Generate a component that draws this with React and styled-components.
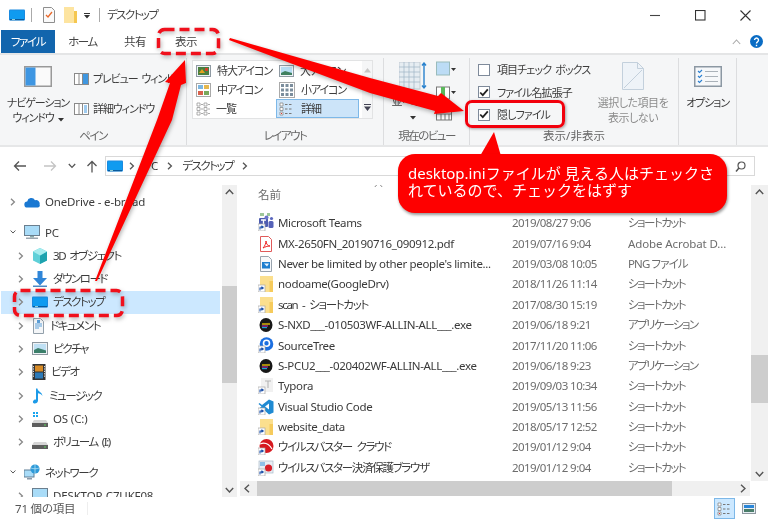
import React from 'react';
import styled, { createGlobalStyle } from 'styled-components';

const Global = createGlobalStyle`
  html, body { margin: 0; padding: 0; background: #fff; }
  #root { width: 768px; height: 520px; overflow: hidden; }
`;

const Shell = styled.div`
  position: relative;
  width: 768px;
  height: 520px;
  overflow: hidden;
  background: #fff;
  font-family: "Noto Sans", "Noto Sans CJK JP", sans-serif;
  font-size: 11.5px;
  font-feature-settings: "palt" 1;
  color: #3c3c3c;
  line-height: 1.2;
`;
const Window = styled.div`
  display: flex;
  flex-direction: column;
  height: 520px;
  filter: blur(0.5px);
`;
const TitleBar = styled.div`
  height: 30px;
  flex: none;
  display: flex;
  align-items: center;
  padding-left: 9px;
`;
const QuickIcon = styled.span`
  display: flex;
  flex: none;
  margin-left: ${p => p.$ml || 0}px;
`;
const TitleSep = styled.span`
  width: 1px;
  height: 14px;
  background: #aaa;
  flex: none;
  margin-left: ${p => p.$ml}px;
`;
const TitleText = styled.span`
  margin-left: 7px;
  font-size: 11.5px;
  letter-spacing: -1.6px;
  color: #444;
`;
const WinButtons = styled.div`
  margin-left: auto;
  display: flex;
  align-items: center;
  gap: 34px;
  padding-right: 17px;
`;
const TabBar = styled.div`
  height: 23px;
  flex: none;
  display: flex;
  align-items: stretch;
  padding-left: 1px;
`;
const Tab = styled.div`
  width: ${p => p.$w}px;
  display: flex;
  align-items: center;
  justify-content: center;
  font-size: 11.5px;
  letter-spacing: ${p => (p.$kana ? '-1.4px' : '-0.4px')};
  background: ${p => (p.$file ? '#1265ad' : 'transparent')};
  color: ${p => (p.$file ? '#fff' : '#444')};
`;
const HelpArea = styled.div`
  margin-left: auto;
  display: flex;
  align-items: center;
  gap: 9px;
  padding-right: 5px;
`;
const Ribbon = styled.div`
  height: 94px;
  flex: none;
  box-sizing: border-box;
  background: #f5f6f7;
  border-top: 2px solid #e4e5e6;
  border-bottom: 2px solid #e6e7e8;
  display: flex;
  font-size: 11px;
  letter-spacing: -1.1px;
  word-spacing: 2px;
`;
const Group = styled.div`
  width: ${p => p.$w}px;
  flex: none;
  box-sizing: border-box;
  border-right: 1px solid #dcdddf;
  margin-top: 3px;
  display: flex;
  flex-direction: column;
`;
const GroupBody = styled.div`
  height: 71px;
  flex: none;
  display: flex;
`;
const GroupLabel = styled.div`
  text-align: center;
  color: #666;
  font-size: 11.5px;
  line-height: 14px;
  letter-spacing: ${p => (p.$wide ? '0' : '-1.5px')};
`;
const LargeButton = styled.div`
  width: ${p => p.$w}px;
  flex: none;
  margin-left: ${p => p.$ml || 0}px;
  display: flex;
  flex-direction: column;
  align-items: center;
  padding-top: ${p => p.$pt ?? 6}px;
  text-align: center;
  line-height: 15px;
  letter-spacing: ${p => (p.$off ? '-0.5px' : 'inherit')};
  color: ${p => (p.$off ? '#8c8c8c' : '#3c3c3c')};
`;
const LargeLabel = styled.div`
  margin-top: ${p => p.$mt}px;
  white-space: nowrap;
  ${p => p.$open && 'letter-spacing: 0;'}
`;
const SmallCol = styled.div`
  display: flex;
  flex-direction: column;
  gap: 14px;
  padding: 13px 0 0 2px;
`;
const SmallBtn = styled.div`
  display: flex;
  align-items: center;
  gap: 4px;
  height: 16px;
  white-space: nowrap;
`;
const Gallery = styled.div`
  margin: 2px 0 0 5px;
  width: 181px;
  height: 59px;
  box-sizing: border-box;
  background: #fff;
  border: 1px solid #e2e3e4;
  display: flex;
`;
const GalleryGrid = styled.div`
  width: 166px;
  flex: none;
  display: grid;
  grid-template-columns: 83px 83px;
  grid-auto-rows: 19px;
`;
const GalleryItem = styled.div`
  display: flex;
  align-items: center;
  gap: 6px;
  padding-left: 3px;
  white-space: nowrap;
  overflow: hidden;
  box-sizing: border-box;
  background: ${p => (p.$sel ? '#cce4f9' : 'transparent')};
  outline: ${p => (p.$sel ? '1px solid #7db8e8' : 'none')};
  outline-offset: -1px;
`;
const GalleryScroll = styled.div`
  width: 10px;
  margin-left: auto;
  display: flex;
  flex-direction: column;
  align-items: center;
  justify-content: space-around;
  background: #f5f6f7;
  color: #777;
`;
const ViewCol = styled.div`
  display: flex;
  flex-direction: column;
  gap: 7px;
  padding: 3px 0 0 0;
`;
const ChecksCol = styled.div`
  width: 131px;
  flex: none;
  display: flex;
  flex-direction: column;
  gap: 7px;
  padding: 4px 0 0 8px;
  box-sizing: border-box;
`;
const CheckRow = styled.div`
  display: flex;
  align-items: center;
  gap: 7px;
  height: 15.5px;
  white-space: nowrap;
  letter-spacing: -0.9px;
`;
const CheckBox = styled.span`
  width: 12px;
  height: 12px;
  flex: none;
  box-sizing: border-box;
  border: 1px solid #7e8a9a;
  background: #fff;
  display: flex;
  align-items: center;
  justify-content: center;
`;
const AddressRow = styled.div`
  height: 38px;
  flex: none;
  display: flex;
  align-items: center;
  box-sizing: border-box;
  padding: 0 13px;
`;
const NavIcons = styled.div`
  width: 92px;
  flex: none;
  display: grid;
  grid-template-columns: 30px 25px 18px 12px;
  align-items: center;
`;
const AddressBox = styled.div`
  flex: 1;
  height: 20px;
  box-sizing: border-box;
  border: 1px solid #d9d9d9;
  display: flex;
  align-items: center;
  padding-left: 1px;
  gap: 9px;
  font-size: 11.5px;
`;
const AddressIcon = styled.span`
  display: flex;
  margin-right: -3px;
`;
const AddressCrumb = styled.span`
  letter-spacing: -1.5px;
`;
const SearchIcon = styled.span`
  margin-left: auto;
  display: flex;
  padding-right: 8px;
`;
const Main = styled.div`
  height: 312px;
  flex: none;
  display: flex;
`;
const Sidebar = styled.div`
  width: 222px;
  flex: none;
  padding-top: 5.5px;
  box-sizing: border-box;
  overflow: hidden;
`;
const TreeRow = styled.div`
  height: 23.3px;
  display: flex;
  align-items: center;
  padding-left: ${p => (p.$child ? 17 : 9)}px;
  margin-top: ${p => p.$gap || 0}px;
  margin-right: 2px;
  margin-left: 1px;
  background: ${p => (p.$sel ? '#cce8ff' : 'transparent')};
  white-space: pre;
  letter-spacing: ${p => (p.$jp ? '-1.45px' : '-0.15px')};
  word-spacing: ${p => (p.$jp ? '2.5px' : '0')};
`;
const Chevron = styled.span`
  width: 6px;
  height: 6px;
  flex: none;
  display: flex;
  align-items: center;
  margin-right: 8px;
`;
const TreeIcon = styled.span`
  display: flex;
  flex: none;
  margin-right: 5px;
`;
const VScroll = styled.div`
  width: ${p => p.$w}px;
  flex: none;
  background: #f0f0f0;
  display: flex;
  flex-direction: column;
  align-items: center;
  justify-content: space-between;
  position: relative;
  padding: 4px 0;
  box-sizing: border-box;
`;
const Thumb = styled.div`
  position: absolute;
  left: 0;
  right: 0;
  top: ${p => p.$t}px;
  height: ${p => p.$h}px;
  background: #cdcdcd;
`;
const ListPane = styled.div`
  flex: 1;
  min-width: 0;
  margin-left: 3px;
  display: flex;
  flex-direction: column;
`;
const ListScroll = styled.div`
  flex: 1;
  min-height: 0;
  display: flex;
`;
const ListCol = styled.div`
  flex: 1;
  display: flex;
  flex-direction: column;
  min-width: 0;
  overflow: hidden;
`;
const ListHeader = styled.div`
  height: 20px;
  box-sizing: border-box;
  padding-bottom: 2px;
  flex: none;
  padding-left: 18px;
  display: flex;
  align-items: flex-end;
  color: #6b6b6b;
  position: relative;
  line-height: 16px;
`;
const SortCaret = styled.span`
  position: absolute;
  left: 134px;
  top: -3px;
  display: flex;
`;
const Sliver = styled.div`
  height: 8px;
  flex: none;
  padding-left: 18px;
`;
const FileRow = styled.div`
  height: 20.38px;
  flex: none;
  display: grid;
  grid-template-columns: 18px 20px 234px 116px 1fr;
  align-items: center;
  white-space: nowrap;
`;
const FileIcon = styled.span`
  grid-column: 2;
  display: flex;
`;
const FileName = styled.span`
  color: #3a3a3a;
  overflow: hidden;
  letter-spacing: ${p => (p.$jp ? '-1.3px' : '-0.33px')};
  word-spacing: ${p => (p.$jp ? '3px' : '0')};
`;
const FileMeta = styled.span`
  color: #6d6d6d;
  overflow: hidden;
  letter-spacing: ${p => p.$ls};
`;
const HScroll = styled.div`
  height: 15px;
  flex: none;
  margin-right: 18px;
  margin-bottom: 1px;
  background: #f0f0f0;
  display: flex;
  align-items: center;
  justify-content: space-between;
  padding: 0 4px;
  position: relative;
`;
const HThumb = styled.div`
  position: absolute;
  left: 17px;
  width: 415px;
  top: 0;
  bottom: 0;
  background: #cdcdcd;
`;
const StatusBar = styled.div`
  height: 23px;
  flex: none;
  display: flex;
  align-items: center;
  padding-left: 15px;
  color: #555;
  font-size: 11.5px;
  letter-spacing: -0.2px;
`;
const StatusSep = styled.span`
  width: 1px;
  height: 13px;
  background: #eee;
  margin-left: 12px;
`;
const ViewSwitch = styled.div`
  margin-left: auto;
  display: flex;
  align-items: center;
  gap: 3px;
  padding-right: 9px;
`;
const ViewBtn = styled.span`
  width: 21px;
  height: 21px;
  box-sizing: border-box;
  display: flex;
  align-items: center;
  justify-content: center;
  background: ${p => (p.$on ? '#cce8ff' : 'transparent')};
  border: 1px solid ${p => (p.$on ? '#7db8e8' : 'transparent')};
`;

/* annotations lying over the screenshot */
const ArrowLayer = styled.svg`
  position: absolute;
  left: 0;
  top: 0;
  width: 768px;
  height: 520px;
  pointer-events: none;
  filter: drop-shadow(1px 2px 2px rgba(0,0,0,.3)) blur(0.4px);
`;
const SolidMark = styled.div`
  position: absolute;
  left: 465px;
  top: 100px;
  width: 100px;
  height: 28px;
  box-sizing: border-box;
  border: 3px solid #f2000c;
  border-radius: 7px;
  box-shadow: 1px 1px 3px rgba(0,0,0,.35);
`;
const Callout = styled.div`
  position: absolute;
  left: 398px;
  top: 154px;
  width: 329px;
  height: 59px;
  box-sizing: border-box;
  background: #fe0000;
  border-radius: 17px;
  box-shadow: 1px 2px 3px rgba(0,0,0,.4);
  color: #fff;
  padding: 11px 8px 0 10px;
  font-size: 15px;
  line-height: 16.5px;
  font-feature-settings: "palt" 0;
  filter: blur(0.3px);
`;
const CalloutTail = styled.svg`
  position: absolute;
  left: 480px;
  top: 130px;
  width: 24px;
  height: 26px;
`;

const S = ({ w = 16, h = 16, vb, children }) => (
  <svg width={w} height={h} viewBox={vb || `0 0 ${w} ${h}`}>{children}</svg>
);

const Monitor = ({ w = 16, h = 13 }) => (
  <S w={w} h={h} vb="0 0 16 13">
    <rect x="0" y="0.5" width="16" height="11" rx="1" fill="#1a8ae0" />
    <rect x="1" y="1.5" width="14" height="8.5" fill="#0f9bf0" />
    <rect x="1" y="10" width="14" height="1.2" fill="#0a5a9c" />
    <rect x="3" y="10.2" width="3" height=".7" fill="#cfe" />
  </S>
);
const PcIcon = () => (
  <S w={16} h={15}>
    <rect x=".5" y=".5" width="15" height="10" fill="#a9dcf8" stroke="#6b7f8f" />
    <rect x="6" y="11" width="4" height="1.5" fill="#8aa" />
    <rect x="2" y="12.5" width="12" height="1.5" fill="#9ba7b0" />
  </S>
);
const FolderSmall = () => (
  <S w={13} h={16}>
    <rect x="9.5" y="4" width="3.5" height="12" fill="#f5c750" />
    <rect x="0" y="0" width="10" height="16" fill="#fde4a0" />
  </S>
);

const Shortcut = () => (
  <g>
    <rect x="0" y="9" width="7" height="7" fill="#fff" stroke="#a7a7a7" strokeWidth=".7" />
    <path d="M2 14.5 V12 H5 M3.4 10.8 L5.2 12 L3.4 13.2" fill="none" stroke="#1a4fa8" strokeWidth="1.1" />
  </g>
);

const FileGlyph = ({ kind }) => {
  switch (kind) {
    case 'teams':
      return (
        <S>
          <rect x="1" y="3" width="9" height="9" rx="1" fill="#4d5cb0" />
          <path d="M3 5h5M5.5 5v6" stroke="#fff" strokeWidth="1.3" />
          <circle cx="8.5" cy="2.5" r="2" fill="#6a74c8" />
          <circle cx="13.5" cy="3.5" r="1.6" fill="#5a66bd" />
          <rect x="10.5" y="6" width="5" height="7" rx="1.5" fill="#5562b8" />
          <Shortcut />
        </S>
      );
    case 'pdf':
      return (
        <S>
          <path d="M2.5 .5h8l3 3v12h-11z" fill="#fff" stroke="#e05a5a" />
          <path d="M5 12c2-2 3-5 3-7 0 3 2 5 4 5-3 0-5 1-7 2z" fill="none" stroke="#e22" strokeWidth="1" />
        </S>
      );
    case 'png':
      return (
        <S>
          <path d="M2.5 .5h8l3 3v12h-11z" fill="#f7f9fb" stroke="#9aa4ae" />
          <rect x="4" y="6" width="8" height="6.5" fill="#1f7fd0" />
          <path d="M6 7.5h5l-2 3z" fill="#e8f4ff" />
        </S>
      );
    case 'folder':
      return (
        <S>
          <rect x="2" y="0" width="13" height="16" fill="#fbdf8e" />
          <rect x="11.5" y="5" width="3.5" height="11" fill="#f6cb5c" />
          <Shortcut />
        </S>
      );
    case 'exe':
      return (
        <S>
          <ellipse cx="8" cy="8" rx="6.5" ry="7" fill="#181818" />
          <path d="M3 7.5l9-3v3l-9 3z" fill="#222" />
          <path d="M4 7h8" stroke="#f2c600" strokeWidth="1.3" />
          <path d="M4 9h6" stroke="#b0289a" strokeWidth="1.2" />
          <path d="M4 10.6h5" stroke="#19a0d8" strokeWidth="1.2" />
        </S>
      );
    case 'tree':
      return (
        <S>
          <circle cx="8.5" cy="7" r="6.8" fill="#1c6fe0" />
          <circle cx="8.5" cy="6.3" r="3" fill="none" stroke="#fff" strokeWidth="1.6" />
          <Shortcut />
        </S>
      );
    case 'typora':
      return (
        <S>
          <rect x="3" y="0" width="12" height="14" fill="#f1f1f1" />
          <path d="M7 3h6M10 3v7" stroke="#b5b5b5" strokeWidth="1.1" />
          <Shortcut />
        </S>
      );
    case 'vscode':
      return (
        <S>
          <path d="M11 0.5l4.5 2v11l-4.5 2L4 9l-2.5 2L.5 10l3-2.5L.5 5l1-1L4 6z" fill="#1f8ad2" />
          <path d="M11 4.5v6L7 7.5z" fill="#fff" />
          <Shortcut />
        </S>
      );
    case 'trend':
      return (
        <S>
          <circle cx="8.5" cy="7" r="7" fill="#d71920" />
          <path d="M2 5c5-2 9 0 12 5" fill="none" stroke="#fff" strokeWidth="1.2" />
          <Shortcut />
        </S>
      );
    case 'trend2':
      return (
        <S>
          <rect x="1" y="1" width="14" height="12" fill="#e8eff6" stroke="#a9bac8" strokeWidth=".7" />
          <circle cx="10.5" cy="8" r="3.6" fill="#d7202a" />
          <rect x="2" y="2" width="5" height="4" fill="#8fc1e8" />
          <Shortcut />
        </S>
      );
    default:
      return null;
  }
};

const ChevR = ({ c = '#888' }) => (
  <S w={6} h={8}><path d="M1 .8 L4.4 4 L1 7.2" fill="none" stroke={c} strokeWidth="1.3" /></S>
);
const ChevD = () => (
  <S w={8} h={6}><path d="M.8 1 L4 4.4 L7.2 1" fill="none" stroke="#555" strokeWidth="1.3" /></S>
);
const Tri = ({ c = '#333' }) => (
  <S w={6} h={4}><path d="M0 0h6L3 3.5z" fill={c} /></S>
);
const Chk = () => (
  <S w={10} h={9}><path d="M1.2 4.5 L3.8 7.2 L8.8 1.4" fill="none" stroke="#222" strokeWidth="1.8" /></S>
);

const PaneIcon = ({ side }) => (
  <S w={15} h={12}>
    <rect x=".5" y=".5" width="14" height="11" fill="#fff" stroke="#8a8a8a" />
    {side === 'l' ? (
      <rect x="9" y="1" width="5" height="10" fill="#3f97e0" />
    ) : (
      <path d="M10 3h3M10 5h3M10 7h3M10 9h3" stroke="#3f97e0" />
    )}
    <path d="M5 1v10M8.5 1v10" stroke="#8a8a8a" />
  </S>
);
const NavPaneIcon = () => (
  <S w={28} h={21}>
    <rect x=".75" y=".75" width="26.5" height="19.5" fill="#fafafa" stroke="#999" strokeWidth="1.5" />
    <rect x="1.5" y="1.5" width="10" height="18" fill="#3e96e2" />
  </S>
);
const GridGlyph = ({ kind }) => {
  if (kind === 'xl' || kind === 'l') {
    return (
      <S w={15} h={12}>
        <rect x=".5" y=".5" width="14" height="11" fill="#eef3f7" stroke="#8f9aa3" />
        <rect x="2" y="2" width="11" height="8" fill={kind === 'xl' ? '#4b7f3f' : '#b6dcf3'} />
        <path d={kind === 'xl' ? 'M3 8l3-4 3 4z' : 'M2 8l4-2 7 2v2H2z'} fill={kind === 'xl' ? '#e6a21d' : '#3f8060'} />
        {kind === 'xl' && <rect x="9" y="3" width="3" height="3" fill="#d2402c" />}
      </S>
    );
  }
  if (kind === 'm') {
    return (
      <S w={15} h={14}>
        <rect x=".5" y=".5" width="14" height="13" fill="#fff" stroke="#a9a9a9" />
        <rect x="2" y="2" width="5" height="4" fill="#7db6e0" />
        <rect x="8" y="2" width="5" height="4" fill="#e6b84e" />
        <rect x="2" y="8" width="5" height="4" fill="#d9614c" />
        <rect x="8" y="8" width="5" height="4" fill="#7aa95c" />
      </S>
    );
  }
  if (kind === 's') {
    return (
      <S w={16} h={16}>
        <rect x=".5" y=".5" width="15" height="15" fill="#fff" stroke="#aaa" />
        {[2, 6.5, 11].map(x => [2, 6.5, 11].map(y => (
          <rect key={`${x}${y}`} x={x} y={y} width="3" height="3" fill={(x + y) % 3 ? '#7b8d9c' : '#d9614c'} />
        )))}
      </S>
    );
  }
  if (kind === 'list') {
    return (
      <S w={14} h={14}>
        <path d="M1 1h3v3H1zM1 5.5h3v3H1zM1 10h3v3H1zM8 1h3v3H8zM8 5.5h3v3H8zM8 10h3v3H8z" fill="#fff" stroke="#999" strokeWidth=".8" />
        <path d="M5 2.5h2M5 7h2M5 11.5h2M12 2.5h2M12 7h2M12 11.5h2" stroke="#aaa" />
      </S>
    );
  }
  return (
    <S w={16} h={14}>
      <path d="M1 1h3v3H1zM1 5.5h3v3H1zM1 10h3v3H1z" fill="#fff" stroke="#888" strokeWidth=".8" />
      <rect x="2" y="11" width="1" height="1" fill="#d33" />
      <path d="M6 2.5h2.5M10 2.5h2.5M6 7h2.5M10 7h2.5M6 11.5h2.5M10 11.5h2.5" stroke="#777" />
    </S>
  );
};

const TREE = [
  { t: 'OneDrive - e-broad', chev: 'r', icon: 'cloud' },
  { t: 'PC', chev: 'd', icon: 'pc', gap: 7 },
  { t: '3D オブジェクト', child: 1, icon: 'cube', jp: 1 },
  { t: 'ダウンロード', child: 1, icon: 'down', jp: 1 },
  { t: 'デスクトップ', child: 1, icon: 'desk', sel: 1, jp: 1 },
  { t: 'ドキュメント', child: 1, icon: 'doc', jp: 1 },
  { t: 'ピクチャ', child: 1, icon: 'pic', jp: 1 },
  { t: 'ビデオ', child: 1, icon: 'video', jp: 1 },
  { t: 'ミュージック', child: 1, icon: 'music', jp: 1 },
  { t: 'OS (C:)', child: 1, icon: 'os' },
  { t: 'ボリューム (I:)', child: 1, icon: 'drive', jp: 1 },
  { t: 'ネットワーク', chev: 'd', icon: 'net', gap: 7, jp: 1 },
  { t: 'DESKTOP-C7UKF08', child: 1, icon: 'pc' },
];

const TreeGlyph = ({ k }) => {
  switch (k) {
    case 'cloud':
      return <S w={16} h={11}><path d="M3.5 10.5a3 3 0 0 1-.3-6A4.2 4.2 0 0 1 11 3.2a3.6 3.6 0 0 1 4.6 4.2 2.4 2.4 0 0 1-1.5 3.1z" fill="#1a78d2" /></S>;
    case 'pc': return <PcIcon />;
    case 'cube':
      return <S w={16} h={16}><path d="M8 0l7 3.5v9L8 16l-7-3.5v-9z" fill="#5fd0d8" /><path d="M8 7.5V16l7-3.5v-9z" fill="#1ea2ae" /><path d="M1 3.5L8 7.5 15 3.5 8 0z" fill="#a7ecee" /></S>;
    case 'down':
      return <S w={16} h={16}><path d="M5.5 0h5v7H15l-7 7.5L1 7h4.5z" fill="#2f86d8" /><rect x="1" y="14.6" width="14" height="1.2" fill="#1f6fb8" /></S>;
    case 'desk': return <Monitor />;
    case 'doc':
      return <S w={13} h={16}><path d="M1.5.5h7l3 3v12h-10z" fill="#f4f6f8" stroke="#93a0ab" /><path d="M3 6h7M3 8h7M3 10h4" stroke="#5b9fd8" /><rect x="5" y="2" width="3" height="3" fill="#5b9fd8" /></S>;
    case 'pic':
      return <S w={16} h={13}><rect x=".5" y=".5" width="15" height="12" fill="#eef2f5" stroke="#8d979f" /><rect x="2" y="2" width="12" height="9" fill="#bfe0f4" /><path d="M2 8l4-2 8 2.5V11H2z" fill="#3b7f6a" /></S>;
    case 'video':
      return <S w={14} h={16}><rect x=".5" width="13" height="16" fill="#333" /><rect x="3" y="1.5" width="8" height="6" fill="#d88b26" /><rect x="3" y="8.5" width="8" height="6" fill="#2d7ab8" /><path d="M1.5 2v12M12.5 2v12" stroke="#ddd" strokeDasharray="1.2 1.2" /></S>;
    case 'music':
      return <S w={12} h={16}><path d="M4 .5h1.4c.3 3 5 3.5 5 7.5-.8-2-3-2.5-4.4-2.8V12.5C6 14.5 4 15.8 2.3 15.5.5 15 .4 13 2 12c.8-.5 1.5-.5 2-.3z" fill="#1d9be8" /></S>;
    case 'os':
      return <S w={16} h={16}><path d="M1 1h2v2H1zM4 1h2v2H4zM1 4h2v2H1zM4 4h2v2H4z" fill="#19a5ee" /><path d="M2 9h12l2 3H0z" fill="#d6d6d6" /><rect y="12" width="16" height="4" fill="#5e5e5e" /><rect x="12" y="13.5" width="2" height="1" fill="#5cd65c" /></S>;
    case 'drive':
      return <S w={16} h={16}><path d="M2 8h12l2 3H0z" fill="#d6d6d6" /><rect y="11" width="16" height="4" fill="#5e5e5e" /><rect x="12" y="12.5" width="2" height="1" fill="#5cd65c" /></S>;
    case 'net':
      return <S w={16} h={16}><rect x="0" y="6" width="10" height="7" fill="#a9dcf8" stroke="#5f7f96" /><rect x="3" y="14" width="5" height="1.5" fill="#89a" /><circle cx="11" cy="5" r="4.6" fill="#2f9ad8" /><path d="M7 4c2 1 6 1 8 0M11 .5v9" stroke="#bfe8f8" strokeWidth=".7" fill="none" /></S>;
    default:
      return null;
  }
};

const FILES = [
  ['teams', 'Microsoft Teams', '2019/08/27 9:06', 'ショートカット'],
  ['pdf', 'MX-2650FN_20190716_090912.pdf', '2019/07/16 9:04', 'Adobe Acrobat D...'],
  ['png', "Never be limited by other people's limite...", '2019/03/08 10:05', 'PNG ファイル'],
  ['folder', 'nodoame(GoogleDrv)', '2018/11/26 11:14', 'ショートカット'],
  ['folder', 'scan - ショートカット', '2017/08/30 15:19', 'ショートカット'],
  ['exe', 'S-NXD___-010503WF-ALLIN-ALL___.exe', '2019/06/18 9:21', 'アプリケーション'],
  ['tree', 'SourceTree', '2017/11/20 11:06', 'ショートカット'],
  ['exe', 'S-PCU2___-020402WF-ALLIN-ALL___.exe', '2019/06/18 9:23', 'アプリケーション'],
  ['typora', 'Typora', '2019/09/03 10:34', 'ショートカット'],
  ['vscode', 'Visual Studio Code', '2019/05/13 11:56', 'ショートカット'],
  ['folder', 'website_data', '2018/05/17 12:52', 'ショートカット'],
  ['trend', 'ウイルスバスター クラウド', '2019/01/12 9:04', 'ショートカット'],
  ['trend2', 'ウイルスバスター決済保護ブラウザ', '2019/01/12 9:04', 'ショートカット'],
];

const hasKana = s => /[\u3040-\u30ff]/.test(s);
const typeSpacing = s => (s.startsWith('Adobe') ? '-0.1px' : s.startsWith('PNG') ? '-0.9px' : '-1.55px');

export default function App() {
  return (
    <Shell>
      <Global />
      <Window>
        <TitleBar>
          <QuickIcon><Monitor /></QuickIcon>
          <TitleSep $ml={6} />
          <QuickIcon $ml={11}>
            <S w={12} h={16}>
              <path d="M.5.5h8l3 3v12H.5z" fill="#fafafa" stroke="#8e8e8e" />
              <path d="M3 8l2 2 4-5" fill="none" stroke="#e8682a" strokeWidth="1.3" />
            </S>
          </QuickIcon>
          <QuickIcon $ml={9}><FolderSmall /></QuickIcon>
          <QuickIcon $ml={7}>
            <S w={7} h={7}><path d="M0 1h6v1H0zM0 3h6L3 6.5z" fill="#333" /></S>
          </QuickIcon>
          <TitleSep $ml={8} />
          <TitleText>デスクトップ</TitleText>
          <WinButtons>
            <S w={11} h={11}><path d="M0 5.5h10" stroke="#444" strokeWidth="1.1" /></S>
            <S w={11} h={11}><rect x=".5" y=".5" width="9.5" height="9.5" fill="none" stroke="#333" strokeWidth="1.1" /></S>
            <S w={11} h={11}><path d="M.5.5l10 10M10.5.5l-10 10" stroke="#333" strokeWidth="1.1" /></S>
          </WinButtons>
        </TitleBar>
        <TabBar>
          <Tab $file $kana $w={54}>ファイル</Tab>
          <Tab $kana $w={55}>ホーム</Tab>
          <Tab $w={50}>共有</Tab>
          <Tab $w={52}>表示</Tab>
          <HelpArea>
            <S w={9} h={6}><path d="M.8 5L4.5 1l3.7 4" fill="none" stroke="#aaa" strokeWidth="1.1" /></S>
            <S w={13} h={13}>
              <circle cx="6.5" cy="6.5" r="6.5" fill="#0a6cc4" />
              <path d="M4.5 5a2 2 0 1 1 3 1.8c-.8.5-1 .8-1 1.7M6.5 9.8v1.4" fill="none" stroke="#fff" strokeWidth="1.4" />
            </S>
          </HelpArea>
        </TabBar>
        <Ribbon>
          <Group $w={187}>
            <GroupBody>
              <LargeButton $w={68} $ml={4} $pt={8}>
                <NavPaneIcon />
                <LargeLabel $mt={8}>ナビゲーション<br />ウィンドウ <Tri /></LargeLabel>
              </LargeButton>
              <SmallCol>
                <SmallBtn><PaneIcon side="l" />プレビュー ウィンドウ</SmallBtn>
                <SmallBtn><PaneIcon side="r" />詳細ウィンドウ</SmallBtn>
              </SmallCol>
            </GroupBody>
            <GroupLabel>ペイン</GroupLabel>
          </Group>
          <Group $w={197}>
            <GroupBody>
              <Gallery>
                <GalleryGrid>
                  <GalleryItem><GridGlyph kind="xl" />特大アイコン</GalleryItem>
                  <GalleryItem><GridGlyph kind="l" />大アイコン</GalleryItem>
                  <GalleryItem><GridGlyph kind="m" />中アイコン</GalleryItem>
                  <GalleryItem><GridGlyph kind="s" />小アイコン</GalleryItem>
                  <GalleryItem><GridGlyph kind="list" />一覧</GalleryItem>
                  <GalleryItem $sel><GridGlyph kind="detail" />詳細</GalleryItem>
                </GalleryGrid>
                <GalleryScroll>
                  <S w={7} h={5}><path d="M0 4.5h7L3.5 0z" fill="#c6c6c6" /></S>
                  <Tri c="#556" />
                  <S w={7} h={7}><path d="M0 0h7v1H0zM0 2.5h7L3.5 7z" fill="#445" /></S>
                </GalleryScroll>
              </Gallery>
            </GroupBody>
            <GroupLabel>レイアウト</GroupLabel>
          </Group>
          <Group $w={86}>
            <GroupBody>
              <LargeButton $w={46} $ml={6} $pt={4}>
                <S w={29} h={28}>
                  <rect x="0" y="0" width="21" height="27" fill="#e6edf2" stroke="#c3ccd3" />
                  <path d="M0 5h21M0 10h21M0 15h21M0 20h21M5 0v27M10 0v27M15 0v27" stroke="#9eb6c6" strokeWidth=".7" />
                  <path d="M25 1v25M23 3.5L25 1l2 2.5M23 23.5L25 26l2-2.5" fill="none" stroke="#2a82cd" strokeWidth="1.4" />
                </S>
                <LargeLabel $mt={3} $open>並べ替え<br /><Tri /></LargeLabel>
              </LargeButton>
              <ViewCol>
                <SmallBtn>
                  <S w={20} h={16}>
                    <rect x=".5" y="1" width="13" height="13" fill="#bcdcf5" stroke="#9bb" />
                    <path d="M15 7h5l-2.5 3z" fill="#333" />
                  </S>
                </SmallBtn>
                <SmallBtn>
                  <S w={20} h={16}>
                    <rect x=".5" y="3" width="13" height="12" fill="#fff" stroke="#777" />
                    <rect x="5" y="3" width="4" height="12" fill="#5cb85c" />
                    <path d="M15 7h5l-2.5 3z" fill="#333" />
                  </S>
                </SmallBtn>
                <SmallBtn>
                  <S w={20} h={14}>
                    <rect x=".5" y="3" width="15" height="9" fill="#fff" stroke="#777" />
                    <path d="M1 6h15M5 6v6M9 6v6M13 6v6" stroke="#777" />
                  </S>
                </SmallBtn>
              </ViewCol>
            </GroupBody>
            <GroupLabel>現在のビュー</GroupLabel>
          </Group>
          <Group $w={209}>
            <GroupBody>
              <ChecksCol>
                <CheckRow><CheckBox />項目チェック ボックス</CheckRow>
                <CheckRow><CheckBox><Chk /></CheckBox>ファイル名拡張子</CheckRow>
                <CheckRow><CheckBox><Chk /></CheckBox>隠しファイル</CheckRow>
              </ChecksCol>
              <LargeButton $w={64} $pt={4} $off>
                <S w={22} h={28}>
                  <path d="M.5.5h15l6 6v21H.5z" fill="#eef3f8" stroke="#c3d0dc" />
                  <path d="M15.5.5v6h6M2 26L20 8" fill="none" stroke="#c3d0dc" />
                </S>
                <LargeLabel $mt={5}>選択した項目を<br />表示しない</LargeLabel>
              </LargeButton>
            </GroupBody>
            <GroupLabel $wide>表示/非表示</GroupLabel>
          </Group>
          <Group $w={58}>
            <GroupBody>
              <LargeButton $w={57} $pt={8}>
                <S w={28} h={21}>
                  <rect x=".75" y=".75" width="26.5" height="19.5" fill="#f6f8fa" stroke="#8c98a3" strokeWidth="1.5" />
                  <path d="M4 5l1.5 1.5L8 4M4 10l1.5 1.5L8 9M4 15l1.5 1.5L8 14" fill="none" stroke="#2a7fd0" strokeWidth="1.1" />
                  <path d="M11 5.5h13M11 10.5h13M11 15.5h13" stroke="#aab2b9" />
                </S>
                <LargeLabel $mt={8}>オプション</LargeLabel>
              </LargeButton>
            </GroupBody>
          </Group>
        </Ribbon>
        <AddressRow>
          <NavIcons>
            <S w={14} h={12}><path d="M13 6H1.5M6 1.5L1.5 6 6 10.5" fill="none" stroke="#555" strokeWidth="1.3" /></S>
            <S w={14} h={12}><path d="M1 6h11.5M8 1.5L12.5 6 8 10.5" fill="none" stroke="#c4c4c4" strokeWidth="1.3" /></S>
            <ChevD />
            <S w={12} h={13}><path d="M6 12.5V1.5M1.5 6L6 1.5 10.5 6" fill="none" stroke="#555" strokeWidth="1.3" /></S>
          </NavIcons>
          <AddressBox>
            <AddressIcon><Monitor /></AddressIcon>
            <ChevR c="#555" />
            <span>PC</span>
            <ChevR c="#555" />
            <AddressCrumb>デスクトップ</AddressCrumb>
            <ChevR c="#555" />
            <SearchIcon>
              <S w={11} h={11}><circle cx="6.5" cy="4.5" r="3.5" fill="none" stroke="#555" strokeWidth="1.2" /><path d="M4 7L1 10.5" stroke="#555" strokeWidth="1.5" /></S>
            </SearchIcon>
          </AddressBox>
        </AddressRow>
        <Main>
          <Sidebar>
            {TREE.map(r => (
              <TreeRow key={r.t} $child={r.child} $sel={r.sel} $gap={r.gap} $jp={r.jp}>
                <Chevron>{r.chev === 'd' ? <ChevD /> : <ChevR />}</Chevron>
                <TreeIcon><TreeGlyph k={r.icon} /></TreeIcon>
                {r.t}
              </TreeRow>
            ))}
          </Sidebar>
          <VScroll $w={15}>
            <Thumb $t={101} $h={97} />
            <S w={9} h={6}><path d="M.8 5L4.5 1l3.7 4" fill="none" stroke="#555" strokeWidth="1.4" /></S>
            <S w={9} h={6}><path d="M.8 1L4.5 5l3.7-4" fill="none" stroke="#555" strokeWidth="1.4" /></S>
          </VScroll>
          <ListPane>
            <ListScroll>
              <ListCol>
                <ListHeader>
                  名前
                  <SortCaret>
                    <S w={9} h={6}><path d="M.8 5L4.5 1l3.7 4" fill="none" stroke="#888" strokeWidth="1" /></S>
                  </SortCaret>
                </ListHeader>
                <Sliver>
                  <S w={14} h={5}><path d="M2 2h4v3H2zM9 2h3v3H9z" fill="#9ec79a" /></S>
                </Sliver>
                {FILES.map(f => (
                  <FileRow key={f[1]}>
                    <FileIcon><FileGlyph kind={f[0]} /></FileIcon>
                    <FileName $jp={hasKana(f[1])}>{f[1]}</FileName>
                    <FileMeta $ls="-0.55px">{f[2]}</FileMeta>
                    <FileMeta $ls={typeSpacing(f[3])}>{f[3]}</FileMeta>
                  </FileRow>
                ))}
              </ListCol>
              <VScroll $w={17}>
                <Thumb $t={170} $h={48} />
                <S w={9} h={6}><path d="M.8 5L4.5 1l3.7 4" fill="none" stroke="#555" strokeWidth="1.4" /></S>
                <S w={9} h={6}><path d="M.8 1L4.5 5l3.7-4" fill="none" stroke="#555" strokeWidth="1.4" /></S>
              </VScroll>
            </ListScroll>
            <HScroll>
              <HThumb />
              <S w={6} h={9}><path d="M5 .8L1 4.5l4 3.7" fill="none" stroke="#555" strokeWidth="1.4" /></S>
              <S w={6} h={9}><path d="M1 .8L5 4.5 1 8.2" fill="none" stroke="#555" strokeWidth="1.4" /></S>
            </HScroll>
          </ListPane>
        </Main>
        <StatusBar>
          71 個の項目
          <StatusSep />
          <ViewSwitch>
            <ViewBtn $on><GridGlyph kind="detail" /></ViewBtn>
            <ViewBtn>
              <S w={14} h={11}><rect x=".5" y=".5" width="13" height="10" fill="#e8eef3" stroke="#8d979f" /><rect x="2" y="2" width="10" height="3" fill="#2a86d8" /><rect x="2" y="6" width="10" height="3" fill="#4a7d6a" /></S>
            </ViewBtn>
          </ViewSwitch>
        </StatusBar>
      </Window>

      <SolidMark />
      <ArrowLayer viewBox="0 0 768 520">
        <rect x="158.5" y="29.5" width="60" height="24" rx="6" fill="none" stroke="#f0101c" strokeWidth="3.5" strokeDasharray="10 5" />
        <rect x="14.5" y="290.5" width="108" height="25" rx="6" fill="none" stroke="#f0101c" strokeWidth="3.5" strokeDasharray="10 5" />
        <polygon points="95,281 157,120 170,83 165,82 185,60 186,83 181,85 172,120 97,281" fill="#fe0000" />
        <polygon points="230,38 370,78 438,96 441,93 464,111 434,114 435,111 370,93 229,40" fill="#fe0000" />
      </ArrowLayer>
      <CalloutTail viewBox="0 0 24 26">
        <polygon points="0,26 14,2 21,26" fill="#fe0000" />
      </CalloutTail>
      <Callout>desktop.iniファイルが 見える人はチェックされているので、チェックをはずす</Callout>
    </Shell>
  );
}
